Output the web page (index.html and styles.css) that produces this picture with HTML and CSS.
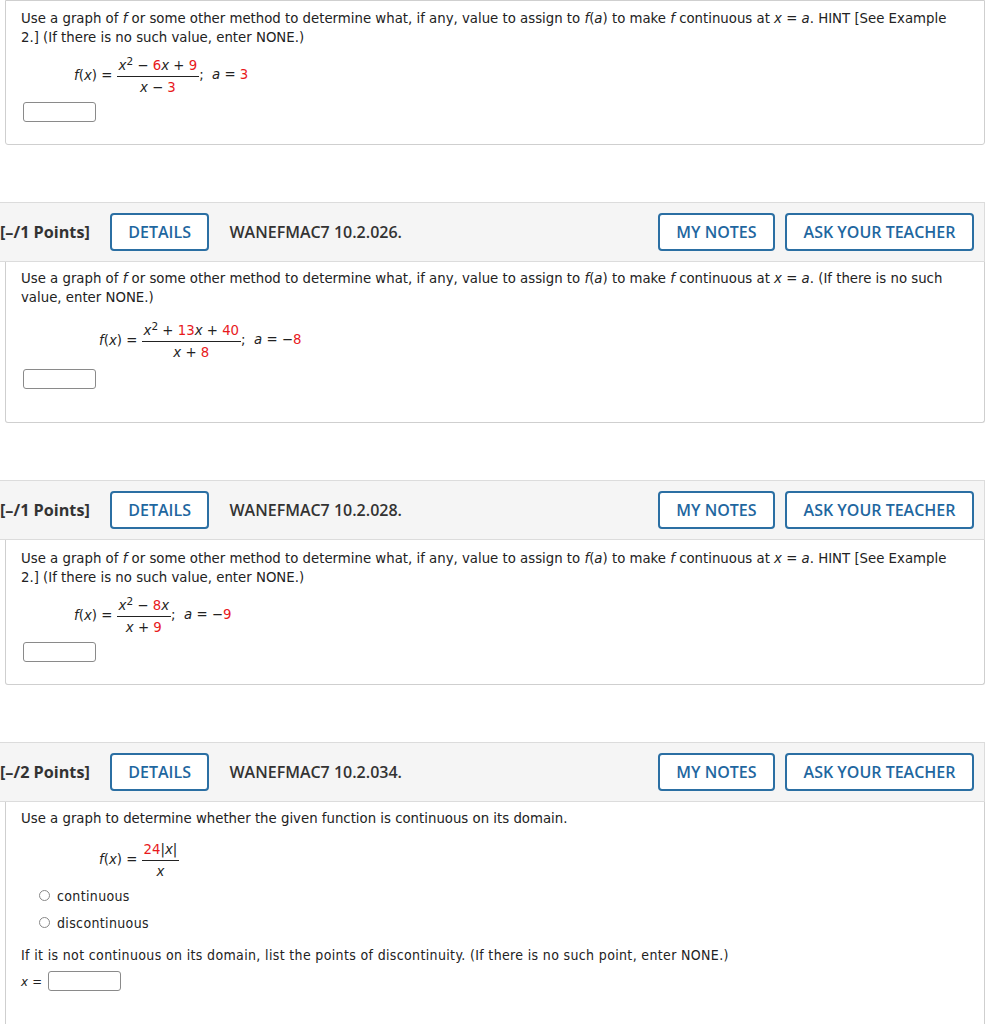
FILE: index.html
```html
<!DOCTYPE html>
<html>
<head>
<meta charset="utf-8">
<link rel="stylesheet" href="styles.css">
</head>
<body>
<div class="question">
  <div class="panel first p-a">
    <p class="prompt">Use a graph of <i>f</i> or some other method to determine what, if any, value to assign to <i>f</i>(<i>a</i>) to make <i>f</i> continuous at <i>x</i> = <i>a</i>. HINT [See Example 2.] (If there is no such value, enter NONE.)</p>
    <div class="formula ind-a">
      <span class="lhs"><i>f</i>(<i>x</i>) =&nbsp;</span>
      <span class="frac">
        <span class="num"><i>x</i><sup>2</sup> − <span class="red">6</span><i>x</i> + <span class="red">9</span></span>
        <span class="den"><i>x</i> − <span class="red">3</span></span>
      </span>
      <span class="rest">;&nbsp; <i>a</i> = <span class="red">3</span></span>
    </div>
    <div class="answer"></div>
  </div>
</div>

<div class="question">
  <div class="bar">
    <span class="points">[–/1 Points]</span>
    <span class="btn">DETAILS</span>
    <span class="title">WANEFMAC7 10.2.026.</span>
    <span class="spacer"></span>
    <span class="btn">MY NOTES</span>
    <span class="btn">ASK YOUR TEACHER</span>
  </div>
  <div class="panel p-b">
    <p class="prompt">Use a graph of <i>f</i> or some other method to determine what, if any, value to assign to <i>f</i>(<i>a</i>) to make <i>f</i> continuous at <i>x</i> = <i>a</i>. (If there is no such value, enter NONE.)</p>
    <div class="formula ind-b tall">
      <span class="lhs"><i>f</i>(<i>x</i>) =&nbsp;</span>
      <span class="frac">
        <span class="num"><i>x</i><sup>2</sup> + <span class="red">13</span><i>x</i> + <span class="red">40</span></span>
        <span class="den"><i>x</i> + <span class="red">8</span></span>
      </span>
      <span class="rest">;&nbsp; <i>a</i> = −<span class="red">8</span></span>
    </div>
    <div class="answer tall"></div>
  </div>
</div>

<div class="question">
  <div class="bar">
    <span class="points">[–/1 Points]</span>
    <span class="btn">DETAILS</span>
    <span class="title">WANEFMAC7 10.2.028.</span>
    <span class="spacer"></span>
    <span class="btn">MY NOTES</span>
    <span class="btn">ASK YOUR TEACHER</span>
  </div>
  <div class="panel p-a p-third">
    <p class="prompt">Use a graph of <i>f</i> or some other method to determine what, if any, value to assign to <i>f</i>(<i>a</i>) to make <i>f</i> continuous at <i>x</i> = <i>a</i>. HINT [See Example 2.] (If there is no such value, enter NONE.)</p>
    <div class="formula ind-a">
      <span class="lhs"><i>f</i>(<i>x</i>) =&nbsp;</span>
      <span class="frac">
        <span class="num"><i>x</i><sup>2</sup> − <span class="red">8</span><i>x</i></span>
        <span class="den"><i>x</i> + <span class="red">9</span></span>
      </span>
      <span class="rest">;&nbsp; <i>a</i> = −<span class="red">9</span></span>
    </div>
    <div class="answer"></div>
  </div>
</div>

<div class="question">
  <div class="bar">
    <span class="points">[–/2 Points]</span>
    <span class="btn">DETAILS</span>
    <span class="title">WANEFMAC7 10.2.034.</span>
    <span class="spacer"></span>
    <span class="btn">MY NOTES</span>
    <span class="btn">ASK YOUR TEACHER</span>
  </div>
  <div class="panel p-c">
    <p class="prompt">Use a graph to determine whether the given function is continuous on its domain.</p>
    <div class="formula ind-b mid">
      <span class="lhs"><i>f</i>(<i>x</i>) =&nbsp;</span>
      <span class="frac">
        <span class="num"><span class="red">24</span>|<i>x</i>|</span>
        <span class="den"><i>x</i></span>
      </span>
    </div>
    <div class="choices">
      <label class="choice"><span class="radio"></span>continuous</label>
      <label class="choice"><span class="radio"></span>discontinuous</label>
    </div>
    <p class="note">If it is not continuous on its domain, list the points of discontinuity. (If there is no such point, enter NONE.)</p>
    <div class="xrow"><span class="xlab"><i>x</i> =</span><span class="answer inline"></span></div>
  </div>
</div>
</body>
</html>
```

FILE: styles.css
```css
body {
  margin: 0;
  font-family: "DejaVu Sans", Verdana, sans-serif;
  font-size: 13.3px;
  color: #222;
  background: #fff;
}

.question {
  width: 985px;
  margin-bottom: 57px;
}

.bar {
  display: flex;
  align-items: center;
  height: 60px;
  box-sizing: border-box;
  background: #f5f5f5;
  border-top: 1px solid #dcdcdc;
  border-right: 1px solid #dcdcdc;
  border-bottom: 1px solid #dcdcdc;
  padding-right: 10px;
  font-family: "Open Sans", "Noto Sans", sans-serif;
  font-weight: 600;
  font-size: 16px;
  color: #333;
}

.points {
  margin-right: 20px;
  font-weight: 700;
  font-size: 16.2px;
}

.title {
  margin-left: 20px;
}

.spacer {
  flex: 1;
}

.btn {
  display: flex;
  align-items: center;
  justify-content: center;
  height: 38px;
  box-sizing: border-box;
  padding: 0 16.5px;
  border: 2px solid #2b6fa3;
  border-radius: 4px;
  background: #fff;
  color: #1f67a0;
}

.btn + .btn {
  margin-left: 10px;
}

.panel {
  margin-left: 5px;
  box-sizing: border-box;
  border: 1px solid #cfcfcf;
  border-top: none;
  border-radius: 0 0 3px 3px;
  padding: 8px 30px 22px 15px;
}

.panel.first {
  border-top: 1px solid #cfcfcf;
}

.panel.p-b {
  padding-top: 7px;
  padding-bottom: 33px;
}

.panel.p-third {
  padding-top: 9px;
}

.panel.p-c {
  padding-top: 7px;
  padding-bottom: 40px;
}

.prompt,
.note {
  margin: 0;
  line-height: 19px;
}

.formula {
  display: flex;
  align-items: center;
  margin-top: 11px;
  line-height: 16px;
}

.formula.tall {
  margin-top: 16px;
}

.formula.mid {
  margin-top: 14px;
}

.ind-a {
  margin-left: 53px;
}

.ind-b {
  margin-left: 78px;
}

.frac {
  display: inline-flex;
  flex-direction: column;
  align-items: center;
}

.num {
  padding: 0 2px 2px;
  border-bottom: 1px solid #222;
  white-space: nowrap;
}

.den {
  padding-top: 3px;
  white-space: nowrap;
}

.lhs {
  position: relative;
  top: -1px;
}

.rest {
  white-space: pre;
  position: relative;
  top: -2px;
}

sup {
  font-size: 10.5px;
  line-height: 0;
  vertical-align: 5px;
}

.red {
  color: #e8191c;
}

.answer {
  width: 73px;
  height: 20px;
  box-sizing: border-box;
  border: 1px solid #8a8a8a;
  border-radius: 3px;
  margin-top: 6px;
  margin-left: 2px;
}

.answer.tall {
  margin-top: 8px;
}

.answer.inline {
  display: inline-block;
  margin: 0 0 0 4px;
  vertical-align: middle;
}

.choices {
  margin-top: 2px;
  margin-left: 18px;
  font-family: "DejaVu Sans Condensed", "DejaVu Sans", sans-serif;
  font-size: 14px;
  letter-spacing: 0.35px;
}

.choice {
  display: flex;
  align-items: center;
  height: 27px;
}

.radio {
  width: 11px;
  height: 11px;
  box-sizing: border-box;
  border: 1px solid #888;
  border-radius: 50%;
  margin-right: 7px;
}

.note {
  margin-top: 10px;
  font-family: "DejaVu Sans Condensed", "DejaVu Sans", sans-serif;
  font-size: 14px;
  letter-spacing: 0.35px;
}

.xrow {
  margin-top: 6px;
  display: flex;
  align-items: center;
  font-family: "DejaVu Sans Condensed", "DejaVu Sans", sans-serif;
  font-size: 13px;
  letter-spacing: 0.3px;
}

.xlab {
  width: 23px;
}
```
